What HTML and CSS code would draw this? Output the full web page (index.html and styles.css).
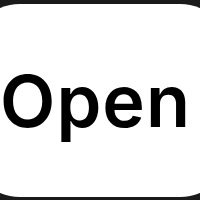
FILE: index.html
```html
<!DOCTYPE html>
<html>
<head>
<meta charset="utf-8">
<link rel="stylesheet" href="styles.css">
</head>
<body>
<div class="btn"><span class="label">Open</span></div>
</body>
</html>
```
FILE: styles.css
```css
html, body {
  margin: 0;
  padding: 0;
  width: 200px;
  height: 200px;
  overflow: hidden;
}
body {
  background: #1a1a1a;
  display: flex;
}
.btn {
  flex: none;
  width: 264px;
  height: 193px;
  margin: 4px 0 3px -32px;
  border-radius: 52px;
  background: #ffffff;
  display: flex;
  align-items: center;
  justify-content: center;
  padding-right: 9px;
  box-sizing: border-box;
}
.label {
  font-family: Inter, "Liberation Sans", sans-serif;
  font-size: 72px;
  font-weight: 600;
  letter-spacing: 1px;
  color: #000;
  line-height: 1;
}
```
